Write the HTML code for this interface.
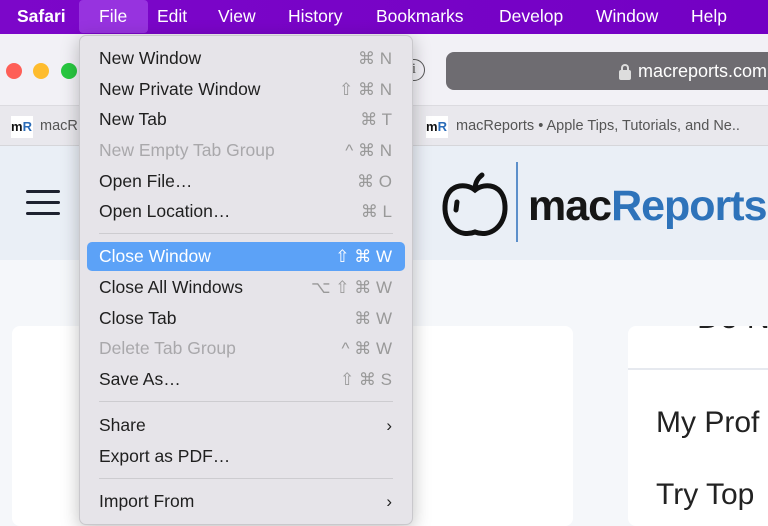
<!DOCTYPE html>
<html><head><style>
*{margin:0;padding:0;box-sizing:border-box}
body{width:768px;height:511px;overflow:hidden;position:relative;font-family:"Liberation Sans",sans-serif;background:#f5f7fa}
.abs{position:absolute}
#mb{left:0;top:0;width:768px;height:34px;background:linear-gradient(90deg,#7c07c9,#7300c4);color:#fff;font-size:17.5px}
#mb span{position:absolute;top:6px}
#tb{left:0;top:34px;width:768px;height:72px;background:#f2f1f6;border-bottom:1px solid #dcdbe0}
#bm{left:0;top:106px;width:768px;height:40px;background:#e9e8ed;border-bottom:1px solid #d6d6da;font-size:14.5px;color:#555}
#hd{left:0;top:146px;width:768px;height:114px;background:#eaeff6}
.card{background:#fff;border-radius:8px}
#menu{left:79px;top:35px;width:334px;height:490px;background:#e6e4e9;border:1px solid #c9c8cc;border-radius:7px;box-shadow:0 4px 18px rgba(0,0,0,.25)}
.it{position:absolute;left:7px;width:318px;height:29px;font-size:17.5px;color:#1f1f1f;line-height:29px;padding-left:12px}
.it .k{position:absolute;right:13px;top:0;color:#999;font-size:17px}
.dis{color:#a9a8ab}
.sel{background:#5ca2f7;color:#fff;border-radius:5px}
.sel .k{color:#fff}
.sep{position:absolute;left:19px;width:294px;height:1px;background:#cdccd0}
</style></head><body>
<div id="mb" class="abs">
<div class="abs" style="left:79px;top:0;width:69px;height:33px;background:#9733df;border-radius:4px"></div>
<span style="left:17px;font-weight:bold">Safari</span>
<span style="left:99px">File</span><span style="left:157px">Edit</span><span style="left:218px">View</span><span style="left:288px">History</span><span style="left:376px">Bookmarks</span><span style="left:499px">Develop</span><span style="left:596px">Window</span><span style="left:691px">Help</span>
</div>
<div id="tb" class="abs">
<div class="abs" style="left:6px;top:29px;width:16px;height:16px;border-radius:50%;background:#fe5f57"></div>
<div class="abs" style="left:33px;top:29px;width:16px;height:16px;border-radius:50%;background:#febc2e"></div>
<div class="abs" style="left:61px;top:29px;width:16px;height:16px;border-radius:50%;background:#28c840"></div>
<div class="abs" style="left:403px;top:25px;width:22px;height:22px;border-radius:50%;border:1.5px solid #555;font-family:'Liberation Serif',serif;font-size:15px;text-align:center;line-height:19px;color:#555">i</div>
<div class="abs" style="left:446px;top:18px;width:330px;height:38px;border-radius:8px;background:#6e6c71;color:#fff;font-size:18px;line-height:38px;padding-left:192px">macreports.com</div>
<div class="abs" style="left:619px;top:36px;width:12px;height:10px;background:#ddd;border-radius:2px"></div>
<div class="abs" style="left:621px;top:30px;width:8px;height:9px;border:2px solid #ddd;border-bottom:none;border-radius:4px 4px 0 0"></div>
</div>
<div id="bm" class="abs">
<div class="abs" style="left:11px;top:10px;width:22px;height:22px;background:#fff;font-size:13px;font-weight:bold;line-height:22px"><span style="color:#111">m</span><span style="color:#2b6cb8">R</span></div>
<span class="abs" style="left:40px;top:12px">macR</span>
<div class="abs" style="left:426px;top:10px;width:22px;height:22px;background:#fff;font-size:13px;font-weight:bold;line-height:22px"><span style="color:#111">m</span><span style="color:#2b6cb8">R</span></div>
<span class="abs" style="left:456px;top:12px">macReports • Apple Tips, Tutorials, and Ne..</span>
</div>
<div id="hd" class="abs">
<div class="abs" style="left:26px;top:44px;width:34px;height:3px;background:#1e2230;border-radius:2px"></div>
<div class="abs" style="left:26px;top:55px;width:34px;height:3px;background:#1e2230;border-radius:2px"></div>
<div class="abs" style="left:26px;top:66px;width:34px;height:3px;background:#1e2230;border-radius:2px"></div>
<svg class="abs" style="left:440px;top:24px" width="70" height="70" viewBox="0 0 70 70"><path d="M35 20 C25 12 6 14 5 36 C4 56 20 68 35 62 C50 68 66 56 65 36 C64 14 45 12 35 20 Z" fill="none" stroke="#111" stroke-width="5"/><path d="M35 20 C35 12 38 8 42 5" fill="none" stroke="#111" stroke-width="5" stroke-linecap="round"/><path d="M17 32 L16 40" stroke="#111" stroke-width="5" stroke-linecap="round"/></svg>
<div class="abs" style="left:516px;top:16px;width:2px;height:80px;background:#5c8fca"></div>
<div class="abs" style="left:528px;top:36px;font-size:43px;font-weight:bold;letter-spacing:-1px"><span style="color:#161616">mac</span><span style="color:#2e73ba">Reports</span></div>
</div>
<div class="abs card" style="left:12px;top:326px;width:561px;height:200px"></div>
<div class="abs card" style="left:628px;top:326px;width:160px;height:200px;overflow:hidden">
<div class="abs" style="left:34px;top:-6px;width:8px;height:4px;background:#f07060;border-radius:0 0 4px 4px"></div>
<div class="abs" style="left:69px;top:-27px;font-size:32px;color:#222">Do N</div>
<div class="abs" style="left:0;top:42px;width:160px;height:2px;background:#e6e9ef"></div>
</div>
<div class="abs" style="left:656px;top:406px;font-size:30px;color:#222">My Prof</div>
<div class="abs" style="left:656px;top:478px;font-size:30px;color:#222">Try Top</div>
<div id="menu" class="abs">
<div class="it" style="top:8px">New Window<span class="k">⌘ N</span></div>
<div class="it" style="top:39px">New Private Window<span class="k">⇧ ⌘ N</span></div>
<div class="it" style="top:69px">New Tab<span class="k">⌘ T</span></div>
<div class="it dis" style="top:100px">New Empty Tab Group<span class="k">^ ⌘ N</span></div>
<div class="it" style="top:131px">Open File…<span class="k">⌘ O</span></div>
<div class="it" style="top:161px">Open Location…<span class="k">⌘ L</span></div>
<div class="sep" style="top:197px"></div>
<div class="it sel" style="top:206px">Close Window<span class="k">⇧ ⌘ W</span></div>
<div class="it" style="top:237px">Close All Windows<span class="k">⌥ ⇧ ⌘ W</span></div>
<div class="it" style="top:268px">Close Tab<span class="k">⌘ W</span></div>
<div class="it dis" style="top:298px">Delete Tab Group<span class="k">^ ⌘ W</span></div>
<div class="it" style="top:329px">Save As…<span class="k">⇧ ⌘ S</span></div>
<div class="sep" style="top:365px"></div>
<div class="it" style="top:375px">Share<span class="k" style="color:#222">›</span></div>
<div class="it" style="top:406px">Export as PDF…</div>
<div class="sep" style="top:442px"></div>
<div class="it" style="top:451px">Import From<span class="k" style="color:#222">›</span></div>
</div>
</body></html>
